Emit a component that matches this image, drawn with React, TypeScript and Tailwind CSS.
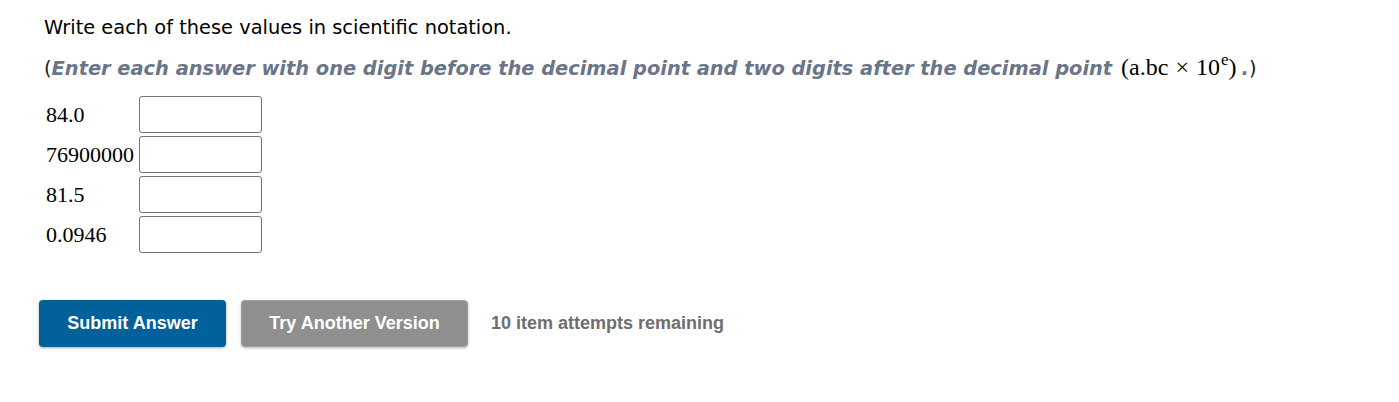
const values = ["84.0", "76900000", "81.5", "0.0946"];

const App = () => {
    return <div className="bg-white w-[1399px] h-[402px] pt-[15px] pl-[44px]">
        <p className="font-['Verdana','DejaVu_Sans',sans-serif] text-[19.4px] text-black leading-[26px] h-[26px]">
            Write each of these values in scientific notation.
        </p>
        <p className="mt-[14px] h-[26px] font-['Verdana','DejaVu_Sans',sans-serif] text-[19.4px] leading-[26px] text-[#6a7588] whitespace-nowrap">
            <span className="text-[#1a1a1a]">(</span>
            <b className="italic font-bold">Enter each answer with one digit before the decimal point and two digits after the decimal point</b>
            <span className="font-['Liberation_Serif',serif] text-[24px] leading-none text-black ml-[9px]">
                (a.bc<span className="mx-[7px]">×</span>10<sup className="text-[17px] -top-[0.6em] ml-[1px]">e</sup>)
            </span>
            <b className="italic ml-[5px]">.</b>
            <span className="text-[#1a1a1a]">)</span>
        </p>
        <div className="mt-[15px] flex flex-col gap-[3px]">
            {values.map(v => <div key={v} className="flex items-center h-[37px]">
                <span className="w-[95px] pl-[2px] -mt-[1px] font-['Liberation_Serif',serif] text-[22px] text-black">{v}</span>
                <div className="w-[123px] h-[37px] border border-[#767676] rounded-[3px] bg-white" />
            </div>)}
        </div>
        <div className="mt-[47px] -ml-[5px] flex items-center font-['Liberation_Sans',Arial,sans-serif]">
            <button className="w-[187px] h-[47px] bg-[#02609a] text-white font-bold text-[18px] rounded-[4px] shadow-[0_1px_3px_rgba(0,0,0,0.35)]">Submit Answer</button>
            <button className="ml-[15px] w-[227px] h-[47px] bg-[#8f8f8f] text-white font-bold text-[18px] rounded-[4px] border border-[#a0a0a0] shadow-[0_1px_3px_rgba(0,0,0,0.3)]">Try Another Version</button>
            <span className="ml-[23px] text-[#6e6e6e] font-bold text-[18px]">10 item attempts remaining</span>
        </div>
    </div>
}

export default App;
